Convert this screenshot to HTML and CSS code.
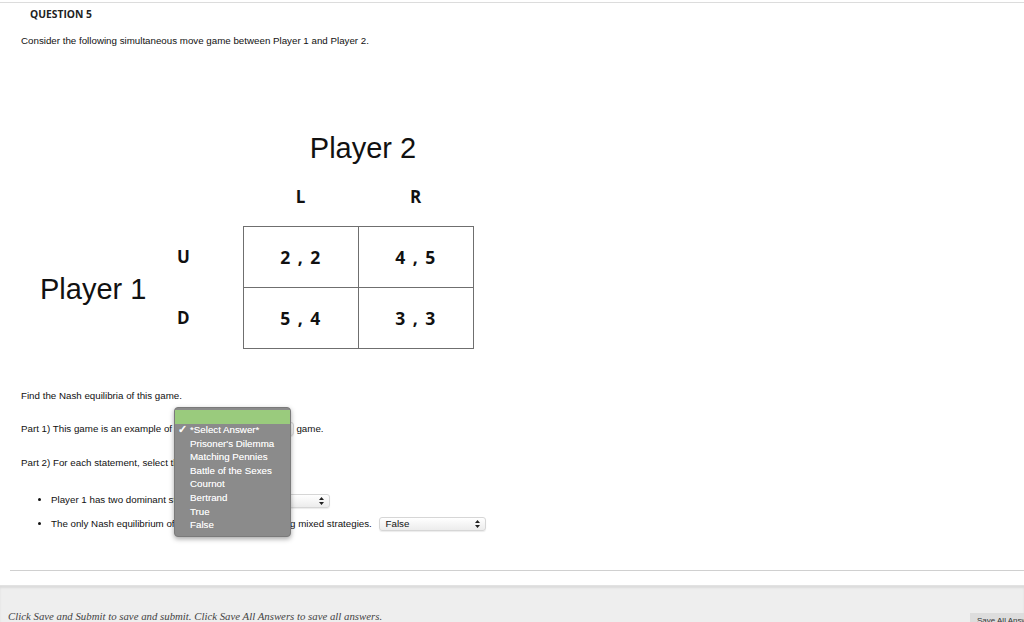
FILE: index.html
```html
<!DOCTYPE html>
<html>
<head>
<meta charset="utf-8">
<link rel="stylesheet" href="styles.css">
</head>
<body>
<div class="topline"></div>
<h2 class="qtitle">QUESTION 5</h2>
<p class="intro">Consider the following simultaneous move game between Player 1 and Player 2.</p>

<div class="game">
  <div class="p2">Player 2</div>
  <div class="cols"><span>L</span><span>R</span></div>
  <div class="p1">Player 1</div>
  <div class="rows"><span>U</span><span>D</span></div>
  <table class="matrix">
    <tr><td>2 , 2</td><td>4 , 5</td></tr>
    <tr><td>5 , 4</td><td>3 , 3</td></tr>
  </table>
</div>

<div class="content">
  <p class="line find">Find the Nash equilibria of this game.</p>
  <p class="line part1">Part 1) This game is an example of <span class="select sel-wide"><span class="sel-text"></span><svg class="arrows" width="5" height="8" viewBox="0 0 5 8"><path d="M2.5 0 L5 3 L0 3 Z M2.5 8 L5 5 L0 5 Z" fill="#222"/></svg></span> game.
      <span class="menu">
        <span class="menu-band"></span>
        <span class="menu-items">
          <span class="item"><span class="check">✓</span>*Select Answer*</span>
          <span class="item">Prisoner's Dilemma</span>
          <span class="item">Matching Pennies</span>
          <span class="item">Battle of the Sexes</span>
          <span class="item">Cournot</span>
          <span class="item">Bertrand</span>
          <span class="item">True</span>
          <span class="item">False</span>
        </span>
      </span>
  </p>
  <p class="line part2">Part 2) For each statement, select the correct answer.</p>
  <ul class="statements">
    <li>Player 1 has two dominant strategies. <span class="select sel-a"><span class="sel-text"></span><svg class="arrows" width="5" height="8" viewBox="0 0 5 8"><path d="M2.5 0 L5 3 L0 3 Z M2.5 8 L5 5 L0 5 Z" fill="#222"/></svg></span></li>
    <li>The only Nash equilibrium of this game is obtained using mixed strategies. <span class="select sel-b"><span class="sel-text">False</span><svg class="arrows" width="5" height="8" viewBox="0 0 5 8"><path d="M2.5 0 L5 3 L0 3 Z M2.5 8 L5 5 L0 5 Z" fill="#222"/></svg></span></li>
  </ul>
  <div class="divider"></div>
</div>

<footer class="footer">
  <p class="footnote">Click Save and Submit to save and submit. Click Save All Answers to save all answers.</p>
  <button class="saveall">Save All Answers</button>
</footer>
</body>
</html>
```
FILE: styles.css
```css
* { box-sizing: border-box; }
html, body { margin: 0; padding: 0; }
body {
  width: 1024px;
  height: 622px;
  overflow: hidden;
  background: #fff;
  font-family: "Liberation Sans", Arial, sans-serif;
  color: #111;
}
.topline {
  height: 1px;
  background: #dcdcdc;
  margin-top: 2px;
}
.qtitle {
  margin: 4px 0 0 30px;
  font-family: "Open Sans", sans-serif;
  font-weight: 700;
  font-size: 10.3px;
  line-height: 14px;
  color: #222;
}
.intro {
  margin: 13px 0 0 21px;
  font-size: 9.75px;
  line-height: 14px;
}

.game {
  margin-top: 79px;
  display: grid;
  grid-template-columns: 40px 130px 73px 230px;
  grid-template-rows: 42px 57px 122px;
}
.p2 {
  grid-column: 4;
  grid-row: 1;
  font-size: 29px;
  line-height: 42px;
  text-align: center;
  padding-left: 10px;
  color: #111;
}
.cols {
  grid-column: 4;
  grid-row: 2;
  display: flex;
  align-items: center;
  padding-bottom: 2px;
}
.cols span, .rows span {
  font-family: "Open Sans", sans-serif;
  font-weight: 700;
  font-size: 17px;
  color: #111;
}
.cols span {
  width: 115px;
  text-align: center;
}
.p1 {
  grid-column: 2;
  grid-row: 3;
  align-self: center;
  font-size: 29px;
  line-height: 34px;
  padding-top: 4px;
}
.rows {
  grid-column: 3;
  grid-row: 3;
  display: flex;
  flex-direction: column;
}
.rows span {
  height: 61px;
  line-height: 61px;
  padding-left: 7px;
}
.matrix {
  grid-column: 4;
  grid-row: 3;
  border-collapse: collapse;
  width: 231px;
}
.matrix td {
  border: 1px solid #6f6f6f;
  width: 115px;
  height: 61px;
  padding: 0;
  text-align: center;
  font-family: "Open Sans", sans-serif;
  font-weight: 700;
  font-size: 17.5px;
  letter-spacing: 1.5px;
  color: #111;
}

.content {
  padding-left: 21px;
}
.line {
  margin: 0;
  font-size: 9.75px;
  line-height: 14px;
  white-space: nowrap;
}
.find { margin-top: 41px; }
.part1 { margin-top: 19px; position: relative; }
.part2 { margin-top: 20px; }

.select {
  display: inline-flex;
  align-items: center;
  justify-content: space-between;
  position: relative;
  height: 14px;
  vertical-align: middle;
  padding: 0 5px 0 6px;
  border: 1px solid #d6d6d6;
  border-radius: 3px;
  background: linear-gradient(#ffffff, #ececec);
  box-shadow: 0 1px 1px rgba(0,0,0,0.08);
  font-size: 9.75px;
  color: #111;
}
.sel-wide { width: 118px; margin-left: 1px; }
.sel-a { width: 114px; }
.sel-b { width: 107px; margin-left: 4px; }
.arrows { flex-shrink: 0; }

.menu {
  position: absolute;
  left: 153px;
  top: -15px;
  width: 117px;
  height: 130px;
  background: #8b8b8b;
  border: 1px solid #7a7a7a;
  border-radius: 4px;
  box-shadow: 0 2px 5px rgba(0,0,0,0.35);
  padding-top: 2px;
  display: flex;
  flex-direction: column;
  z-index: 5;
}
.menu-band {
  display: block;
  height: 14px;
  background: #9acb7d;
}
.menu-items {
  display: flex;
  flex-direction: column;
  margin-top: -1px;
}
.item {
  position: relative;
  display: block;
  height: 13.6px;
  line-height: 13.6px;
  padding-left: 15px;
  color: #fafafa;
  font-size: 9.75px;
  text-shadow: 0 0 0.6px rgba(255,255,255,0.7);
}
.check {
  position: absolute;
  left: 3px;
  top: 0;
  font-size: 10.5px;
  font-weight: 700;
}

.statements {
  margin: 23px 0 0 0;
  padding-left: 30px;
  font-size: 9.75px;
  line-height: 14px;
}
.statements li {
  white-space: nowrap;
  margin-bottom: 9px;
}
.divider {
  height: 1px;
  background: #d0d0d0;
  margin: 39px 0 0 -11px;
}

.footer {
  margin-top: 14px;
  height: 60px;
  background: #eeeeee;
  box-shadow: inset 0 2px 2px rgba(0,0,0,0.08);
  border-top: 1px solid #e2e2e2;
  display: flex;
  align-items: flex-start;
  justify-content: space-between;
  padding: 23px 0 0 8px;
}
.footnote {
  margin: 0;
  font-family: "Liberation Serif", serif;
  font-style: italic;
  font-size: 10.8px;
  line-height: 14px;
  color: #444;
}
.saveall {
  margin: 4px -60px 0 0;
  width: 114px;
  height: 24px;
  flex-shrink: 0;
  border: none;
  background: #dddddd;
  font-family: "Liberation Sans", sans-serif;
  font-size: 8px;
  line-height: 9px;
  color: #333;
  text-align: left;
  padding: 3px 0 0 7px;
  display: flex;
  align-items: flex-start;
  white-space: nowrap;
  overflow: hidden;
}
```
